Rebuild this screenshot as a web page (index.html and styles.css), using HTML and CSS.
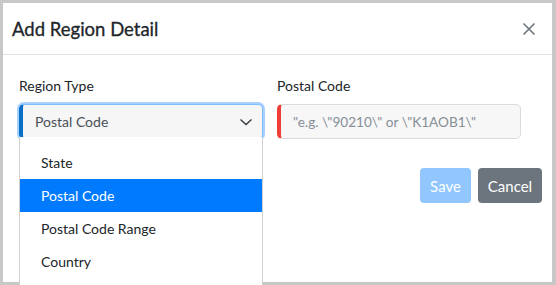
FILE: index.html
```html
<!DOCTYPE html>
<html>
<head>
<meta charset="utf-8">
<link rel="stylesheet" href="styles.css">
</head>
<body>
<div class="modal">
  <div class="modal-header">
    <h5 class="modal-title">Add Region Detail</h5>
    <button class="close" aria-label="Close">
      <svg width="14" height="14" viewBox="0 0 14 14"><path d="M1.5 1.5 L12.5 12.5 M12.5 1.5 L1.5 12.5" stroke="#6c757d" stroke-width="1.6" fill="none"/></svg>
    </button>
  </div>
  <div class="modal-body">
    <div class="fields">
      <div class="field">
        <label class="label">Region Type</label>
        <div class="select">
          <span class="select-value">Postal Code</span>
          <svg class="chevron" width="16" height="16" viewBox="0 0 16 16"><path d="M2.5 5.5 L8 10.5 L13.5 5.5" stroke="#343a40" stroke-width="1.4" fill="none"/></svg>
        </div>
      </div>
      <div class="field">
        <label class="label">Postal Code</label>
        <div class="input"><span class="placeholder">"e.g. \"90210\" or \"K1AOB1\"</span></div>
      </div>
    </div>
    <div class="actions">
      <button class="btn btn-save">Save</button>
      <button class="btn btn-cancel">Cancel</button>
    </div>
  </div>
  <ul class="dropdown">
    <li class="option">State</li>
    <li class="option selected">Postal Code</li>
    <li class="option">Postal Code Range</li>
    <li class="option">Country</li>
  </ul>
</div>
</body>
</html>
```
FILE: styles.css
```css
* { box-sizing: border-box; }
html, body { margin: 0; padding: 0; }
body {
  background: #c8c8c8;
  width: 556px;
  height: 285px;
  overflow: hidden;
  padding: 3px 4px 3px 3px;
  font-family: "Lato", "Liberation Sans", sans-serif;
  color: #212529;
}
.modal {
  position: relative;
  background: #fff;
  height: 279px;
}
.modal-header {
  height: 52px;
  border-bottom: 1px solid #dee2e6;
  display: flex;
  align-items: center;
  justify-content: space-between;
  padding: 0 16px 0 9px;
}
.modal-title {
  margin: 0;
  font-size: 18.5px;
  font-weight: 400;
  color: #212529;
  -webkit-text-stroke: 0.3px #212529;
}
.close {
  border: 0;
  background: none;
  padding: 0;
  width: 14px;
  height: 14px;
  display: block;
}
.close svg { display: block; }
.modal-body {
  padding: 22px 10px 0 16px;
}
.fields {
  display: grid;
  grid-template-columns: 244px 244px;
  column-gap: 14px;
}
.label {
  display: block;
  font-size: 14px;
  line-height: 17px;
  color: #212529;
  margin-bottom: 10px;
}
.select {
  height: 35px;
  border: 1px solid #80bdff;
  border-left: 4px solid #0b6fc7;
  border-radius: 5px;
  background: #f6f6f6;
  box-shadow: 0 0 0 2px rgba(0, 123, 255, 0.35);
  display: flex;
  align-items: center;
  justify-content: space-between;
  padding: 0 8px 0 12px;
}
.select-value {
  font-size: 14px;
  color: #495057;
}
.chevron { display: block; }
.input {
  height: 35px;
  border: 1px solid #dcdcdc;
  border-left: 4px solid #ef3e36;
  border-radius: 5px;
  background: #f7f7f7;
  display: flex;
  align-items: center;
  padding: 0 12px;
}
.placeholder {
  font-size: 13.6px;
  color: #868e96;
  white-space: nowrap;
}
.actions {
  display: flex;
  justify-content: flex-end;
  gap: 7px;
  margin-top: 29px;
}
.btn {
  height: 35px;
  border: 0;
  border-radius: 4px;
  font-family: "Lato", "Liberation Sans", sans-serif;
  font-size: 15px;
  color: #fff;
  padding: 0 11px;
}
.btn-save { background: #91c6ff; width: 51px; padding: 0; }
.btn-cancel { background: #6c757d; width: 64px; padding: 0; }
.dropdown {
  position: absolute;
  left: 16px;
  top: 134px;
  width: 244px;
  height: 150px;
  margin: 0;
  padding: 9px 0 0 0;
  list-style: none;
  background: #fff;
  border-left: 1px solid #d0d0d0;
  border-right: 1px solid #d0d0d0;
}
.option {
  height: 33px;
  line-height: 33px;
  padding-left: 21px;
  font-size: 14px;
  color: #212529;
}
.option.selected {
  background: #007bff;
  color: #fff;
}
```
